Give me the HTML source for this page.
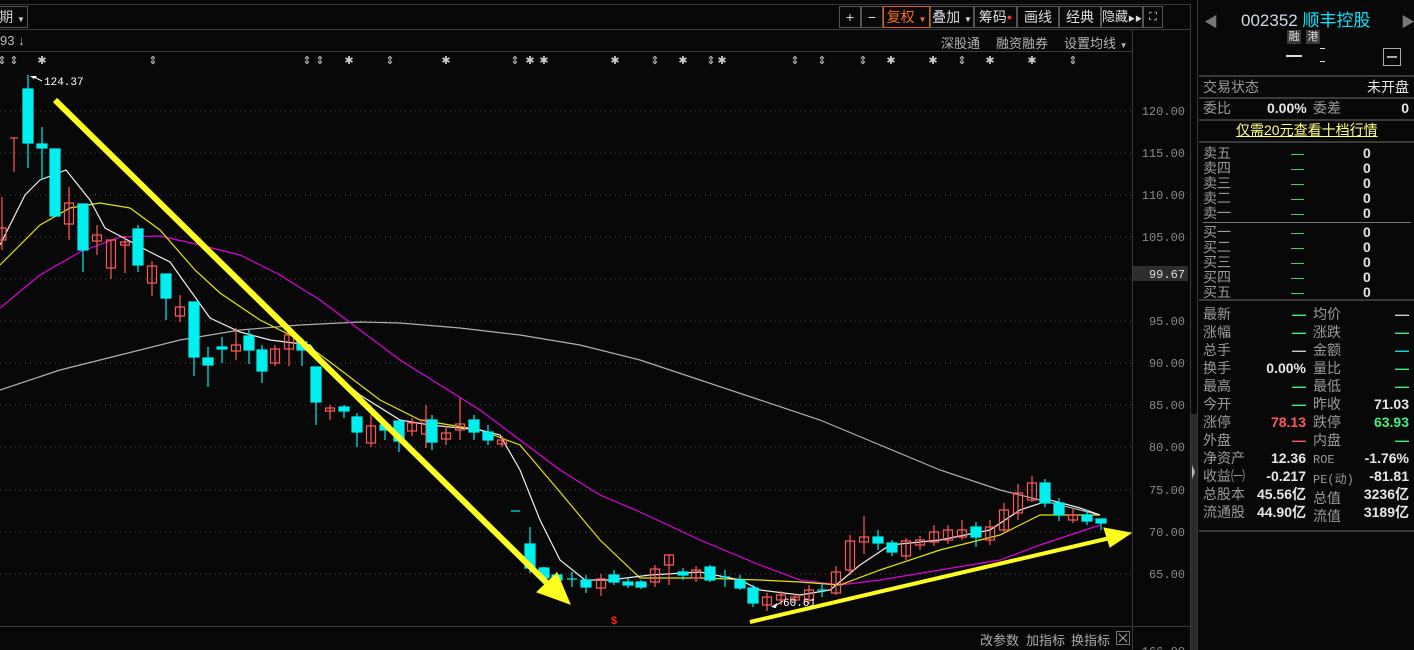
<!DOCTYPE html>
<html><head><meta charset="utf-8"><style>
*{margin:0;padding:0;box-sizing:border-box}
body{width:1414px;height:650px;background:#080808;overflow:hidden;position:relative;font-family:"Liberation Sans","Noto Sans CJK SC",sans-serif;color:#c8c8c8}
.a{position:absolute;white-space:nowrap}
.t{font-size:13px;color:#b4b4b4}
.btn{position:absolute;top:6px;height:22px;border:1px solid #555;font-size:14px;color:#ddd;text-align:center;line-height:20px;white-space:nowrap;overflow:hidden}
.r{position:absolute;font-size:14px;line-height:15px}
.g{color:#9a9a9a}
.w{color:#e6e6e6;font-weight:bold}
.gr{color:#3ef07a}
.hl{position:absolute;left:1199px;width:215px;height:2px;background:#3a3a3a}
</style></head><body>
<svg class="a" style="left:0;top:0" width="1414" height="650">
<line x1="0" y1="4.5" x2="1190" y2="4.5" stroke="#3a3a3a"/>
<line x1="0" y1="29.5" x2="1190" y2="29.5" stroke="#3a3a3a"/>
<line x1="0" y1="51.5" x2="1132" y2="51.5" stroke="#3a3a3a"/>
<line x1="1132.5" y1="30" x2="1132.5" y2="650" stroke="#3a3a3a"/>
<line x1="1190.5" y1="4" x2="1190.5" y2="650" stroke="#3a3a3a"/>
<line x1="1197.5" y1="0" x2="1197.5" y2="650" stroke="#3a3a3a"/>
<rect x="1191" y="414" width="6" height="236" fill="#2a2a2a"/>
<path d="M1192 465 L1195 472 L1192 479 Z" fill="#bbb"/>
<line x1="0" y1="626.5" x2="1190" y2="626.5" stroke="#3a3a3a"/>
<g stroke="#4a4a4a" stroke-dasharray="1,4">
<line x1="0" x2="1132" y1="111" y2="111"/><line x1="0" x2="1132" y1="153" y2="153"/><line x1="0" x2="1132" y1="195" y2="195"/><line x1="0" x2="1132" y1="237" y2="237"/><line x1="0" x2="1132" y1="279" y2="279"/><line x1="0" x2="1132" y1="321" y2="321"/><line x1="0" x2="1132" y1="363" y2="363"/><line x1="0" x2="1132" y1="405" y2="405"/><line x1="0" x2="1132" y1="447" y2="447"/><line x1="0" x2="1132" y1="490" y2="490"/><line x1="0" x2="1132" y1="532" y2="532"/><line x1="0" x2="1132" y1="574" y2="574"/>
</g>
<g fill="#8a8a8a" font-family="Liberation Mono,monospace" font-size="12" text-anchor="end">
<text x="1185" y="115">120.00</text><text x="1185" y="157">115.00</text><text x="1185" y="199">110.00</text><text x="1185" y="241">105.00</text><text x="1185" y="325">95.00</text><text x="1185" y="367">90.00</text><text x="1185" y="409">85.00</text><text x="1185" y="451">80.00</text><text x="1185" y="494">75.00</text><text x="1185" y="536">70.00</text><text x="1185" y="578">65.00</text><text x="1185" y="655">166.00</text>
</g>
<rect x="1133" y="266" width="55" height="15" fill="#2e2e2e"/>
<text x="1185" y="278" fill="#ddd" font-family="Liberation Mono,monospace" font-size="12" text-anchor="end">99.67</text>
<g fill="#ccc" font-family="DejaVu Sans,sans-serif" font-size="11" text-anchor="middle">
<text x="2" y="64">⇕</text><text x="14" y="64">⇕</text><text x="42" y="64">✱</text><text x="153" y="64">⇕</text><text x="307" y="64">⇕</text><text x="320" y="64">⇕</text><text x="349" y="64">✱</text><text x="390" y="64">⇕</text><text x="446" y="64">✱</text><text x="515" y="64">⇕</text><text x="530" y="64">✱</text><text x="544" y="64">✱</text><text x="615" y="64">✱</text><text x="655" y="64">⇕</text><text x="683" y="64">✱</text><text x="711" y="64">⇕</text><text x="722" y="64">✱</text><text x="795" y="64">⇕</text><text x="822" y="64">⇕</text><text x="863" y="64">⇕</text><text x="891" y="64">✱</text><text x="933" y="64">✱</text><text x="962" y="64">⇕</text><text x="990" y="64">✱</text><text x="1032" y="64">✱</text><text x="1073" y="64">⇕</text>
</g>
<polyline fill="none" stroke="#b0b0b0" stroke-width="1.2" points="0,390 60,370 120,355 180,340 240,330 300,325 360,322 400,323 460,328 520,335 580,345 640,360 700,380 760,400 820,420 880,445 940,470 1000,490 1040,500 1080,510 1100,515"/>
<polyline fill="none" stroke="#e000e0" stroke-width="1.2" points="0,308 40,275 80,252 120,237 160,236 200,245 240,255 280,275 320,300 360,330 400,360 440,385 480,410 520,440 560,470 600,495 640,512 700,540 760,565 800,580 840,585 880,580 940,570 1000,560 1040,545 1100,525"/>
<polyline fill="none" stroke="#e6e600" stroke-width="1.2" points="0,265 40,225 70,208 100,203 130,208 160,230 195,270 220,293 260,320 300,340 330,362 380,400 420,420 480,430 520,445 560,492 600,540 640,578 700,578 760,580 800,582 840,585 880,570 940,550 1000,535 1040,515 1100,515"/>
<polyline fill="none" stroke="#eee" stroke-width="1.2" points="0,245 25,195 40,180 66,170 90,200 105,228 120,236 150,252 170,262 190,290 210,318 240,332 270,340 310,345 330,370 360,395 400,420 430,425 480,430 500,435 520,470 540,520 560,560 585,580 610,580 650,575 700,572 740,580 760,590 800,595 830,590 860,565 890,545 940,540 990,530 1020,510 1050,500 1080,508 1100,515"/>
<g stroke="#ff5a5a" fill="none" stroke-width="1.2">
<line x1="2" y1="197" x2="2" y2="250"/><rect x="-3" y="228" width="9" height="12"/>
<line x1="14" y1="138" x2="14" y2="172"/><line x1="10" y1="138" x2="18" y2="138"/>
<line x1="69" y1="187" x2="69" y2="240"/><rect x="64.5" y="203" width="9" height="21"/>
<line x1="97" y1="225" x2="97" y2="255"/><rect x="92.5" y="235" width="9" height="6"/>
<line x1="111" y1="240" x2="111" y2="279"/><rect x="106.5" y="240" width="9" height="28"/>
<line x1="125" y1="236" x2="125" y2="273"/><rect x="120.5" y="242" width="9" height="3"/>
<line x1="152" y1="261" x2="152" y2="296"/><rect x="147.5" y="266" width="9" height="17"/>
<line x1="180" y1="295" x2="180" y2="322"/><rect x="175.5" y="307" width="9" height="9"/>
<line x1="236" y1="328" x2="236" y2="360"/><rect x="231.5" y="345" width="9" height="6"/>
<line x1="275" y1="345" x2="275" y2="366"/><rect x="270.5" y="349" width="9" height="14"/>
<line x1="289" y1="330" x2="289" y2="366"/><rect x="284.5" y="335" width="9" height="14"/>
<line x1="330" y1="405" x2="330" y2="420"/><rect x="325.5" y="408" width="9" height="3"/>
<line x1="371" y1="415" x2="371" y2="447"/><rect x="366.5" y="426" width="9" height="17"/>
<line x1="412" y1="418" x2="412" y2="436"/><rect x="407.5" y="423" width="9" height="8"/>
<line x1="426" y1="405" x2="426" y2="448"/><rect x="421.5" y="420" width="9" height="14"/>
<line x1="446" y1="426" x2="446" y2="445"/><rect x="441.5" y="433" width="9" height="6"/>
<line x1="460" y1="398" x2="460" y2="440"/><rect x="455.5" y="424" width="9" height="6"/>
<line x1="502" y1="436" x2="502" y2="447"/><rect x="497.5" y="440" width="9" height="4"/>
<line x1="601" y1="574" x2="601" y2="596"/><rect x="596.5" y="579" width="9" height="9"/>
<line x1="655" y1="565" x2="655" y2="587"/><rect x="650.5" y="569" width="9" height="13"/>
<line x1="669" y1="554" x2="669" y2="585"/><rect x="664.5" y="555" width="9" height="10"/>
<line x1="696" y1="566" x2="696" y2="582"/><rect x="691.5" y="570" width="9" height="8"/>
<line x1="767" y1="593" x2="767" y2="611"/><rect x="762.5" y="597" width="9" height="8"/>
<line x1="781" y1="591" x2="781" y2="605"/><rect x="776.5" y="595" width="9" height="5"/>
<line x1="795" y1="594" x2="795" y2="604"/><rect x="790.5" y="597" width="9" height="3"/>
<line x1="809" y1="585" x2="809" y2="604"/><rect x="804.5" y="590" width="9" height="10"/>
<line x1="836" y1="566" x2="836" y2="595"/><rect x="831.5" y="572" width="9" height="21"/>
<line x1="850" y1="535" x2="850" y2="575"/><rect x="845.5" y="541" width="9" height="29"/>
<line x1="864" y1="516" x2="864" y2="554"/><rect x="859.5" y="537" width="9" height="5"/>
<line x1="906" y1="538" x2="906" y2="560"/><rect x="901.5" y="541" width="9" height="15"/>
<line x1="920" y1="536" x2="920" y2="550"/><rect x="915.5" y="540" width="9" height="5"/>
<line x1="934" y1="525" x2="934" y2="546"/><rect x="929.5" y="532" width="9" height="10"/>
<line x1="948" y1="525" x2="948" y2="544"/><rect x="943.5" y="530" width="9" height="10"/>
<line x1="962" y1="520" x2="962" y2="540"/><rect x="957.5" y="530" width="9" height="7"/>
<line x1="990" y1="520" x2="990" y2="545"/><rect x="985.5" y="527" width="9" height="13"/>
<line x1="1004" y1="503" x2="1004" y2="533"/><rect x="999.5" y="510" width="9" height="20"/>
<line x1="1018" y1="484" x2="1018" y2="520"/><rect x="1013.5" y="493" width="9" height="20"/>
<line x1="1032" y1="476" x2="1032" y2="502"/><rect x="1027.5" y="483" width="9" height="17"/>
<line x1="1073" y1="508" x2="1073" y2="523"/><rect x="1068.5" y="515" width="9" height="5"/>
</g>
<g fill="#00f0f0" stroke="#00f0f0" stroke-width="1.2">
<line x1="28" y1="75" x2="28" y2="168"/><rect x="23" y="89" width="10" height="54"/>
<line x1="42" y1="127" x2="42" y2="180"/><rect x="37" y="144" width="10" height="4"/>
<line x1="55" y1="149" x2="55" y2="216"/><rect x="50" y="149" width="10" height="67"/>
<line x1="83" y1="204" x2="83" y2="272"/><rect x="78" y="204" width="10" height="46"/>
<line x1="138" y1="225" x2="138" y2="272"/><rect x="133" y="229" width="10" height="36"/>
<line x1="166" y1="274" x2="166" y2="320"/><rect x="161" y="274" width="10" height="24"/>
<line x1="194" y1="302" x2="194" y2="376"/><rect x="189" y="302" width="10" height="55"/>
<line x1="208" y1="347" x2="208" y2="387"/><rect x="203" y="358" width="10" height="7"/>
<line x1="222" y1="337" x2="222" y2="363"/><rect x="217" y="347" width="10" height="2"/>
<line x1="249" y1="330" x2="249" y2="364"/><rect x="244" y="336" width="10" height="14"/>
<line x1="262" y1="345" x2="262" y2="383"/><rect x="257" y="350" width="10" height="21"/>
<line x1="302" y1="338" x2="302" y2="366"/><rect x="297" y="342" width="10" height="8"/>
<line x1="316" y1="367" x2="316" y2="425"/><rect x="311" y="367" width="10" height="35"/>
<line x1="344" y1="405" x2="344" y2="418"/><rect x="339" y="407" width="10" height="4"/>
<line x1="357" y1="413" x2="357" y2="447"/><rect x="352" y="417" width="10" height="15"/>
<line x1="385" y1="420" x2="385" y2="440"/><rect x="380" y="425" width="10" height="5"/>
<line x1="399" y1="421" x2="399" y2="452"/><rect x="394" y="421" width="10" height="20"/>
<line x1="432" y1="415" x2="432" y2="450"/><rect x="427" y="420" width="10" height="22"/>
<line x1="474" y1="415" x2="474" y2="440"/><rect x="469" y="420" width="10" height="12"/>
<line x1="488" y1="425" x2="488" y2="445"/><rect x="483" y="432" width="10" height="8"/>
<line x1="511" y1="511" x2="520" y2="511"/>
<line x1="530" y1="527" x2="530" y2="573"/><rect x="525" y="544" width="10" height="24"/>
<line x1="544" y1="567" x2="544" y2="582"/><rect x="539" y="568" width="10" height="10"/>
<line x1="557" y1="572" x2="557" y2="584"/><rect x="552" y="575" width="10" height="5"/>
<line x1="572" y1="572" x2="572" y2="587"/><line x1="567" y1="579" x2="577" y2="579"/>
<line x1="586" y1="575" x2="586" y2="593"/><rect x="581" y="580" width="10" height="7"/>
<line x1="614" y1="570" x2="614" y2="585"/><rect x="609" y="575" width="10" height="7"/>
<line x1="628" y1="578" x2="628" y2="588"/><rect x="623" y="582" width="10" height="3"/>
<line x1="641" y1="580" x2="641" y2="589"/><rect x="636" y="582" width="10" height="5"/>
<line x1="683" y1="568" x2="683" y2="580"/><rect x="678" y="572" width="10" height="3"/>
<line x1="710" y1="565" x2="710" y2="582"/><rect x="705" y="567" width="10" height="13"/>
<line x1="725" y1="570" x2="725" y2="587"/><line x1="720" y1="577" x2="730" y2="577"/>
<line x1="740" y1="575" x2="740" y2="590"/><rect x="735" y="580" width="10" height="8"/>
<line x1="753" y1="585" x2="753" y2="607"/><rect x="748" y="588" width="10" height="15"/>
<line x1="822" y1="583" x2="822" y2="597"/><line x1="817" y1="590" x2="827" y2="590"/>
<line x1="878" y1="530" x2="878" y2="550"/><rect x="873" y="537" width="10" height="6"/>
<line x1="892" y1="540" x2="892" y2="556"/><rect x="887" y="543" width="10" height="9"/>
<line x1="976" y1="522" x2="976" y2="547"/><rect x="971" y="527" width="10" height="10"/>
<line x1="1045" y1="479" x2="1045" y2="507"/><rect x="1040" y="483" width="10" height="20"/>
<line x1="1059" y1="498" x2="1059" y2="521"/><rect x="1054" y="503" width="10" height="12"/>
<line x1="1087" y1="510" x2="1087" y2="525"/><rect x="1082" y="515" width="10" height="6"/>
<line x1="1101" y1="519" x2="1101" y2="530"/><rect x="1096" y="519" width="10" height="4"/>
</g>
<path d="M30 76 L37 76 L34 79 Z" fill="#fff"/><path d="M34 77 L42 81" stroke="#fff"/>
<text x="44" y="85" fill="#fff" font-family="Liberation Mono,monospace" font-size="11">124.37</text>
<path d="M771 607 L777 603 L776 608 Z" fill="#fff"/><path d="M775 606 L783 601" stroke="#fff"/>
<text x="783" y="606" fill="#fff" font-family="Liberation Mono,monospace" font-size="11">60.61</text>
<text x="614" y="624" fill="#ff2020" font-family="Liberation Mono,monospace" font-size="11" font-weight="bold" text-anchor="middle">$</text>
<g fill="#ffff20" stroke="#ffff20">
<line x1="55" y1="100" x2="550" y2="586" stroke-width="6"/>
<path d="M570 604 L537 592 L557 573 Z"/>
<line x1="750" y1="622" x2="1110" y2="538" stroke-width="4"/>
<path d="M1131 533 L1104 528 L1110 547 Z"/>
</g>
<rect x="1116.5" y="631.5" width="13" height="13" fill="none" stroke="#777"/>
<path d="M1119 634 L1127 642 M1127 634 L1119 642" stroke="#aaa"/>
</svg>

<div class="btn" style="left:-4px;width:32px;color:#ccc">期 <span style="font-size:8px">▼</span></div>
<div class="a t" style="left:0;top:33px;color:#bbb">93 ↓</div>
<div class="btn" style="left:839px;width:22px">+</div>
<div class="btn" style="left:861px;width:22px">−</div>
<div class="btn" style="left:883px;width:47px;border-color:#e0601a;color:#ff6a1a">复权 <span style="font-size:8px">▼</span></div>
<div class="btn" style="left:930px;width:44px">叠加 <span style="font-size:8px">▼</span></div>
<div class="btn" style="left:974px;width:43px">筹码<span style="color:#f33;font-size:9px;vertical-align:top">●</span></div>
<div class="btn" style="left:1017px;width:42px">画线</div>
<div class="btn" style="left:1059px;width:42px">经典</div>
<div class="btn" style="left:1101px;width:42px;font-size:13px">隐藏<span style="font-size:7px">▶▶</span></div>
<div class="btn" style="left:1143px;width:20px;font-size:11px">⛶</div>
<div class="a t" style="left:941px;top:33px">深股通</div>
<div class="a t" style="left:996px;top:33px">融资融券</div>
<div class="a t" style="left:1064px;top:33px">设置均线 <span style="font-size:8px">▼</span></div>
<div class="a t" style="left:980px;top:630px;color:#aaa">改参数</div>
<div class="a t" style="left:1026px;top:630px;color:#aaa">加指标</div>
<div class="a t" style="left:1071px;top:630px;color:#aaa">换指标</div>

<div class="a" style="left:1204px;top:12px;color:#777;font-size:14px">◀</div>
<div class="a" style="left:1401px;top:12px;color:#777;font-size:14px">▶</div>
<div class="a" style="left:1241px;top:6px;font-size:17px;color:#cfd8e8">002352 <span style="color:#00e8ff">顺丰控股</span></div>
<div class="a" style="left:1287px;top:30px;width:14px;height:14px;background:#3a3a3a;color:#ddd;font-size:11px;line-height:14px;text-align:center">融</div>
<div class="a" style="left:1306px;top:30px;width:14px;height:14px;background:#3a3a3a;color:#ddd;font-size:11px;line-height:14px;text-align:center">港</div>
<div class="a" style="left:1286px;top:55px;width:16px;height:2px;background:#ddd"></div>
<div class="a" style="left:1320px;top:48px;width:5px;height:1px;background:#ddd"></div>
<div class="a" style="left:1320px;top:61px;width:5px;height:1px;background:#ddd"></div>
<div class="a" style="left:1383px;top:48px;width:18px;height:18px;border:1px solid #aaa"></div>
<div class="a" style="left:1387px;top:56px;width:10px;height:2px;background:#aaa"></div>
<div class="hl" style="top:75px"></div>
<div class="r g" style="left:1203px;top:80px">交易状态</div>
<div class="r" style="right:5px;top:80px;color:#e6e6e6">未开盘</div>
<div class="hl" style="top:97px"></div>
<div class="r g" style="left:1203px;top:101px">委比</div>
<div class="r w" style="left:1267px;top:101px">0.00%</div>
<div class="r g" style="left:1313px;top:101px">委差</div>
<div class="r w" style="right:5px;top:101px">0</div>
<div class="hl" style="top:119px"></div>
<div class="r" style="left:1236px;top:123px;color:#ffff80;text-decoration:underline">仅需20元查看十档行情</div>
<div class="hl" style="top:141px"></div>
<div class="a" style="left:1203px;top:222px;width:208px;height:1px;background:#777"></div>
<div class="hl" style="top:299px"></div>
<div class="hl" style="top:530px"></div>
<div class="r g" style="left:1203px;top:146px">卖五<br>卖四<br>卖三<br>卖二<br>卖一</div>
<div class="r g" style="left:1203px;top:225px">买一<br>买二<br>买三<br>买四<br>买五</div>
<div class="r gr" style="left:1291px;top:146px;font-size:13px">—<br>—<br>—<br>—<br>—</div>
<div class="r gr" style="left:1291px;top:225px;font-size:13px">—<br>—<br>—<br>—<br>—</div>
<div class="r w" style="left:1363px;top:146px">0<br>0<br>0<br>0<br>0</div>
<div class="r w" style="left:1363px;top:225px">0<br>0<br>0<br>0<br>0</div>
<div class="r g" style="left:1203px;top:305px;line-height:18px">最新<br>涨幅<br>总手<br>换手<br>最高<br>今开<br>涨停<br>外盘<br>净资产<br>收益㈠<br>总股本<br>流通股</div>
<div class="r g" style="left:1313px;top:305px;line-height:18px">均价<br>涨跌<br>金额<br>量比<br>最低<br>昨收<br>跌停<br>内盘<br><span style="font-family:Liberation Mono,monospace;font-size:12px">ROE</span><br><span style="font-family:Liberation Mono,monospace;font-size:12px">PE(动)</span><br>总值<br>流值</div>
<div class="r w" style="right:108px;top:305px;line-height:18px;text-align:right"><span class="gr">—</span><br><span class="gr">—</span><br><span style="color:#ccc">—</span><br>0.00%<br><span class="gr">—</span><br><span class="gr">—</span><br><span style="color:#ff5a5a">78.13</span><br><span style="color:#ff5a5a">—</span><br>12.36<br>-0.217<br>45.56亿<br>44.90亿</div>
<div class="r w" style="right:5px;top:305px;line-height:18px;text-align:right"><span style="color:#ccc">—</span><br><span class="gr">—</span><br><span style="color:#00e0f0">—</span><br><span class="gr">—</span><br><span class="gr">—</span><br>71.03<br><span class="gr">63.93</span><br><span class="gr">—</span><br>-1.76%<br>-81.81<br>3236亿<br>3189亿</div>
</body></html>
